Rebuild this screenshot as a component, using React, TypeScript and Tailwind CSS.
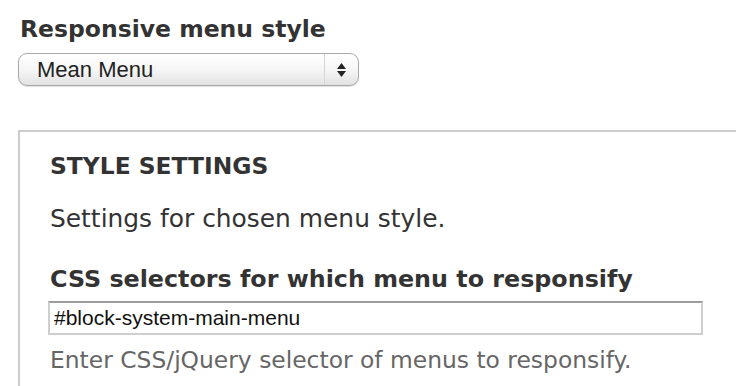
export default function App() {
  return (
    <div className="h-screen w-full overflow-hidden bg-white pl-[18px] pt-[15px] font-['DejaVu_Sans',sans-serif] text-[#333]">
      <h2 className="ml-[2px] text-[23.5px] font-bold leading-[28px]">Responsive menu style</h2>
      <div className="mt-[10px] flex h-[33px] w-[341px] items-stretch rounded-[9px] border border-[#a8a8a8] bg-gradient-to-b from-white via-[#f6f6f6] to-[#e2e2e2] shadow-[0_1px_1px_rgba(0,0,0,0.12)]">
        <div className="flex flex-1 items-center pl-[18px] font-['Liberation_Sans',sans-serif] text-[22px] text-[#222]">
          Mean Menu
        </div>
        <div className="flex w-[34px] flex-col items-center justify-center gap-[2px] border-l border-[#d4d4d4]">
          <svg width="9" height="6" viewBox="0 0 9 6"><path d="M4.5 0L9 6H0z" fill="#222" /></svg>
          <svg width="9" height="6" viewBox="0 0 9 6"><path d="M0 0h9L4.5 6z" fill="#222" /></svg>
        </div>
      </div>
      <div className="mt-[44px] w-[740px] border-l-2 border-t-2 border-[#ccc] pl-[30px] pt-[20px] pb-10">
        <h3 className="text-[23.4px] font-bold leading-[28px]">STYLE SETTINGS</h3>
        <p className="mt-[24px] text-[24.9px] leading-[30px]">Settings for chosen menu style.</p>
        <label className="mt-[31px] block text-[23.8px] font-bold leading-[28px]">CSS selectors for which menu to responsify</label>
        <div className="mt-[8px] ml-[-2px] flex h-[34px] w-[655px] items-center border-2 border-[#cfcfcf] border-t-[#9c9c9c] pl-[4px] font-['Liberation_Sans',sans-serif] text-[21px] text-[#111]">
          #block-system-main-menu
        </div>
        <p className="mt-[11px] text-[23.4px] leading-[28px] text-[#666]">Enter CSS/jQuery selector of menus to responsify.</p>
      </div>
    </div>
  );
}
